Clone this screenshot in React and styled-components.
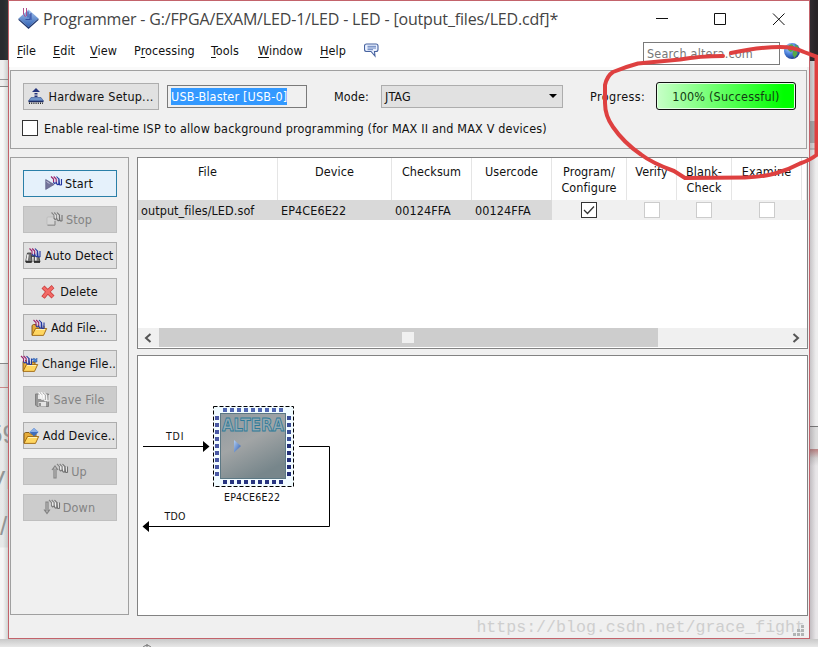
import React, { Component } from 'react';
import styled, { createGlobalStyle } from 'styled-components';

const GlobalStyle = createGlobalStyle`
*{
  box-sizing:border-box;
}
body{
  margin:0;
  overflow:hidden;
  font-family:"DejaVu Sans Condensed","DejaVu Sans",Tahoma,sans-serif;
  font-stretch:condensed;
  font-size:12.5px;
  letter-spacing:.08px;
  color:#111;
}
`

// the little bundle of wires that most of the tool icons carry
const Wires = ({ x = 0, y = 0, grey, light }) => {
  const a = light ? '#fff' : grey ? '#858585' : '#9c2468';
  const b = light ? '#f2f2f2' : grey ? '#727272' : '#2438a0';
  return (
    <g transform={`translate(${x} ${y})`} fill="none" strokeWidth="1.1">
      {!light && <path d="M1.500 1.500l2 2v4M4 1.500l2 2v5M6.800 3v6M9.200 3.500v5.500" stroke={grey ? '#eee' : '#dfe2f6'} />}
      <path d="M0 .5l2.500 2.500v3.500M2.700 .5l2.500 2.500v4" stroke={a} />
      <path d="M5.500 .5l2.300 2.500v5.500M8 2.500l.5 6M10.500 3v6" stroke={b} />
      <path d="M2.500 6q1 2.500 2.700 .5q1 3 2.800 1.800q1.500 1.200 2.500 .5" stroke={b} />
    </g>
  );
};

const Folder = ({ y = 0 }) => (
  <g transform={`translate(0 ${y})`}>
    <path d="M1 13.500V4l1.500-1h3.500l1.500 1.500h5.500v2.500" fill="#e6ac3a" stroke="#7d5412" strokeWidth=".9" />
    <path d="M1 13.900L4.500 7h11.200l-3.200 6.900z" fill="#ffd660" stroke="#9c6510" strokeWidth=".9" />
    <path d="M5 8h9" stroke="#fff3b8" />
  </g>
);

const icons = {
  hardware: (
    <>
      <path d="M8 0L12 4H4zM6.500 5h3v1.500h-3zM6.500 7.500h3V9h-3z" fill="#24347c" />
      <path d="M3 9.500h10L15.500 13H.5z" fill="#6f93c9" stroke="#33508f" strokeWidth=".6" />
      <path d="M.5 13.500h15" stroke="#1d2d66" strokeWidth="1.400" />
      <path d="M1 15.300h14" stroke="#222" strokeWidth="1.500" strokeDasharray="1 1.200" />
    </>
  ),
  start: (
    <>
      <path d="M.7 3.500l8.500 5-8.500 5z" fill="#75759a" stroke="#54547e" strokeWidth=".6" />
      <path d="M1.500 5.500l3 2" stroke="#c5c5dc" />
      <Wires x={6} y={0} />
    </>
  ),
  stop: (
    <>
      <rect x="1" y="5" width="8" height="8" rx="1" fill="#d4d4d4" stroke="#b4b4b4" strokeWidth=".6" />
      <path d="M1.500 13.200h7.500V9" fill="none" stroke="#888" />
      <Wires x={5.5} y={0} grey />
    </>
  ),
  detect: (
    <>
      <path d="M2.500 5h3.500l1 9H.6zM9.500 5H13l2 9H9z" fill="#777" stroke="#333" strokeWidth=".8" />
      <path d="M2 12.500l1-6M10.800 12.500V7" stroke="#eee" strokeWidth="1.600" />
      <path d="M1 14h5.500M9 14h6M6.500 8h3" stroke="#222" strokeWidth="1.300" />
      <Wires x={4.5} y={0} />
    </>
  ),
  delete: (
    <>
      <path d="M3 3Q7 7 13 13M13 2.700Q8 7 3 13.500" fill="none" stroke="#c93d3d" strokeWidth="4.200" />
      <path d="M3.400 3.400Q7 7 12.600 12.600M12.600 3.100Q8 7 3.400 13" fill="none" stroke="#f26a66" strokeWidth="2.700" />
    </>
  ),
  addFile: (
    <>
      <Folder y={1.5} />
      <Wires x={2.5} y={-0.5} />
    </>
  ),
  changeFile: (
    <>
      <Folder y={1.5} />
      <path d="M9.500 4q2-3 4.500-.5l1-1.500v4h-4l1.300-1.200q-1.500-1.500-2.800-.8z" fill="#4c86d4" stroke="#28539c" strokeWidth=".5" />
      <Wires x={-1} y={-0.5} />
    </>
  ),
  save: (
    <>
      <path d="M1.500 2h13v12.500H3l-1.500-1.500z" fill="#969696" stroke="#808080" />
      <path d="M4 2.500h7V7H4z" fill="#e8e8e8" />
      <path d="M4.500 10h7.500v4.500H4.500z" fill="#e4e4e4" />
      <path d="M6 11v3" stroke="#777" strokeWidth="1.500" />
      <Wires x={4.5} y={0} light />
    </>
  ),
  addDevice: (
    <>
      <Folder y={1.5} />
      <path d="M11 0l4.500 4-4.500 4.500L6.500 4z" fill="#3f6dbb" />
      <path d="M11 0l4.500 4H6.500z" fill="#8bb0e6" />
    </>
  ),
  up: (
    <>
      <path d="M1 6l3-4 3 4M3 4.500V14h2V4.500" fill="none" stroke="#838383" strokeWidth="1.200" />
      <Wires x={6} y={-0.5} grey />
    </>
  ),
  down: (
    <>
      <path d="M1 9.500l3 4 3-4M3 11.500V2h2v9.500" fill="none" stroke="#838383" strokeWidth="1.200" />
      <Wires x={6} y={-0.5} grey />
    </>
  ),
};

const Icon = ({ name }) => (
  <IconSvg width="17" height="16" viewBox="0 0 17 16">{icons[name]}</IconSvg>
);

const AppLogo = () => (
  <svg width="21" height="22" viewBox="0 0 21 22">
    <defs>
      <linearGradient id="gem" x1="0" y1="0" x2="0" y2="1">
        <stop offset="0" stopColor="#a9c7ef" />
        <stop offset="1" stopColor="#2f61b4" />
      </linearGradient>
    </defs>
    <path d="M10.500 1.500L20.500 10.500 10.500 19 .5 10.500z" fill="url(#gem)" />
    <path d="M.5 10.500l10 8.500 10-8.500v1.500l-10 9-10-9z" fill="#1f3872" />
    <path d="M5.500 0v6l2 3M8.500 0v8" fill="none" stroke="#b0508e" />
    <path d="M10 3.500v6M7.500 11.500h4.500V6M13 5v7" fill="none" stroke="#344fa6" />
  </svg>
);

const Bubble = () => (
  <BubbleSvg width="16" height="15" viewBox="0 0 16 15">
    <path d="M2.500 1h9.500q2 0 2 2v3.500q0 2-2 2H10.500l.5 4.500-4-4.500h-4.500q-2 0-2-2V3q0-2 2-2z" fill="#eaf1ff" stroke="#47639f" strokeWidth="1.100" />
    <path d="M3.500 3.300H12M3.500 5H12M3.500 6.700H9" stroke="#5674b4" strokeWidth=".9" />
  </BubbleSvg>
);

const Globe = () => (
  <svg width="17" height="17" viewBox="0 0 17 17">
    <defs>
      <radialGradient id="sea" cx=".35" cy=".3" r=".8">
        <stop offset="0" stopColor="#b9d8ff" />
        <stop offset=".5" stopColor="#4a80da" />
        <stop offset="1" stopColor="#142e7c" />
      </radialGradient>
    </defs>
    <circle cx="8" cy="9" r="8" fill="url(#sea)" />
    <path d="M4 4Q6 1.800 8.500 2.500L10 5 8 7l1 2-2.500 1L4 8zM9 8.500l4 1 .5 2.500-3 4-2-3.500zM11.500 2.500l3 2.500-1 2.500-2.500-1z" fill="#55a848" />
  </svg>
);

const pins = [0, 1, 2, 3, 4, 5, 6, 7, 8];

const ChainDiagram = () => (
  <Canvas viewBox="138 356 669 259">
    <defs>
      <linearGradient id="die" x1="0" y1="0" x2=".5" y2="1">
        <stop offset="0" stopColor="#8f9aa0" />
        <stop offset=".5" stopColor="#a2a5a6" />
        <stop offset="1" stopColor="#77868b" />
      </linearGradient>
      <linearGradient id="mark" x1="0" y1="0" x2="1" y2="1">
        <stop offset="0" stopColor="#b2d0f5" />
        <stop offset="1" stopColor="#2d57a8" />
      </linearGradient>
    </defs>
    <path d="M143 446.500h61M299 446.500h30.500v80H149" fill="none" stroke="#000" />
    <path d="M203 441v11l6.500-5.500zM149 521v11l-6.500-5.500z" />
    <rect x="213.500" y="406.500" width="80" height="80" fill="#f1fbff" stroke="#000" strokeDasharray="4 2" />
    {pins.map(i => (
      <g key={i}>
        <rect x={223 + i * 7} y="408" width="4" height="4" fill="#5166b2" />
        <rect x={223 + i * 7} y="480" width="4" height="4" fill="#27347f" />
        <rect x="215" y={416 + i * 7} width="4" height="4" fill="#4957a3" />
        <rect x="287" y={416 + i * 7} width="4" height="4" fill={i < 4 ? '#3a4d95' : '#222e78'} />
      </g>
    ))}
    <rect x="220.500" y="413.500" width="65" height="65" fill="url(#die)" stroke="#5c7884" />
    <Brand x="222" y="430.500" textLength="62" lengthAdjust="spacingAndGlyphs">ALTERA</Brand>
    <path d="M234 440l7 6-7 6.500z" fill="url(#mark)" />
    <Label x="166" y="440" textLength="17.500">TDI</Label>
    <Label x="164.500" y="520" textLength="21">TDO</Label>
    <Label x="224" y="501" textLength="56">EP4CE6E22</Label>
  </Canvas>
);

const menus = [
  { text: 'File', width: 36 },
  { text: 'Edit', width: 37 },
  { text: 'View', width: 44 },
  { text: 'Processing', width: 77, key: 1 },
  { text: 'Tools', width: 47 },
  { text: 'Window', width: 62 },
  { text: 'Help', width: 44 },
];

const tools = [
  { icon: 'start', text: 'Start', active: true },
  { icon: 'stop', text: 'Stop', disabled: true },
  { icon: 'detect', text: 'Auto Detect' },
  { icon: 'delete', text: 'Delete' },
  { icon: 'addFile', text: 'Add File...' },
  { icon: 'changeFile', text: 'Change File..' },
  { icon: 'save', text: 'Save File', disabled: true },
  { icon: 'addDevice', text: 'Add Device..' },
  { icon: 'up', text: 'Up', disabled: true },
  { icon: 'down', text: 'Down', disabled: true },
];

const columns = ['File', 'Device', 'Checksum', 'Usercode', 'Program/\nConfigure', 'Verify', 'Blank-\nCheck', 'Examine'];
const cells = ['output_files/LED.sof', 'EP4CE6E22', '00124FFA', '00124FFA'];

class App extends Component {
  render() {
    return (
      <Desktop>
        <GlobalStyle />
        <LeftEdge>
          <Behind>59</Behind>
          <Behind>VI</Behind>
          <Behind>/</Behind>
        </LeftEdge>
        <Window>
          <TitleBar>
            <AppLogo />
            <Title>Programmer - G:/FPGA/EXAM/LED-1/LED - LED - [output_files/LED.cdf]*</Title>
            <WindowButtons>
              <svg width="131" height="14" viewBox="0 0 131 14" fill="none" stroke="#111">
                <path d="M2 6.500h12M60.500 1.500h11v11h-11zM119 1.500l11.500 11.500M130.500 1.500L119 13" />
              </svg>
            </WindowButtons>
          </TitleBar>
          <MenuBar>
            {menus.map(({ text, width, key = 0 }) => (
              <MenuItem key={text} $width={width}>{text.slice(0, key)}<u>{text[key]}</u>{text.slice(key + 1)}</MenuItem>
            ))}
            <Bubble />
            <Search>Search altera.com</Search>
            <Globe />
          </MenuBar>
          <SetupPanel>
            <SetupRow>
              <SetupButton><Icon name="hardware" />Hardware Setup...</SetupButton>
              <HardwareField><Selected>USB-Blaster [USB-0]</Selected></HardwareField>
              <ModeLabel>Mode:</ModeLabel>
              <ModeSelect>JTAG<Caret /></ModeSelect>
              <ProgressLabel>Progress:</ProgressLabel>
              <Progress>100% (Successful)</Progress>
            </SetupRow>
            <IspRow>
              <Check />
              Enable real-time ISP to allow background programming (for MAX II and MAX V devices)
            </IspRow>
          </SetupPanel>
          <Main>
            <Sidebar>
              {tools.map(t => (
                <ToolButton key={t.text} $active={t.active} disabled={t.disabled}>
                  <Icon name={t.icon} />{t.text}
                </ToolButton>
              ))}
            </Sidebar>
            <Content>
              <Table>
                <Grid>
                  {columns.map(c => <Head key={c}>{c}</Head>)}
                  <Head />
                  {cells.map((c, i) => <Cell key={i} $selected>{c}</Cell>)}
                  <Cell $center>
                    <Check>
                      <svg width="14" height="14" viewBox="0 0 14 14"><path d="M2 7l3.500 3.500L12 3.500" fill="none" stroke="#333" strokeWidth="1.300" /></svg>
                    </Check>
                  </Cell>
                  <Cell $center><Check $dim /></Cell>
                  <Cell $center><Check $dim /></Cell>
                  <Cell $center><Check $dim /></Cell>
                  <Cell />
                </Grid>
                <ScrollBar>
                  <ScrollArrow><svg width="8" height="10"><path d="M6.500 1L2 5l4.500 4" fill="none" stroke="#555" strokeWidth="2" /></svg></ScrollArrow>
                  <Thumb><Grip /></Thumb>
                  <ScrollArrow $end><svg width="8" height="10"><path d="M1.500 1L6 5 1.500 9" fill="none" stroke="#555" strokeWidth="2" /></svg></ScrollArrow>
                </ScrollBar>
              </Table>
              <ChainDiagram />
            </Content>
          </Main>
          <StatusBar>
            <Watermark>https://blog.csdn.net/grace_fight</Watermark>
            <SizeGrip width="12" height="12" fill="#b2b4b4">
              <path d="M8 0h3v3H8zM4 4h3v3H4zM8 4h3v3H8zM0 8h3v3H0zM4 8h3v3H4zM8 8h3v3H8z" />
            </SizeGrip>
          </StatusBar>
        </Window>
        <RightEdge />
        <BottomEdge>
          <svg width="24" height="8" fill="none" stroke="#777"><path d="M2 6.500h20M5 8q7-12 14 0M12 1v7" /></svg>
        </BottomEdge>
        <Scribble viewBox="0 0 818 647">
          <path d="M731 53Q760 47 780 47 794 47 804 52L820 58M816.500 58V155Q810 160 800 163.500 788 170 775 173.500 762 177 745 177.500L685 178 674 171Q652 163 641 154.500 624 143 613 127 605 116 605 103V85Q607 76 613 72 625 67 638 63.500L680 59.500Q700 56 723 56" />
        </Scribble>
      </Desktop>
    );
  }
}

const Desktop = styled.div`
position:relative;
display:grid;
grid-template-columns:8px 802px 8px;
grid-template-rows:639px 8px;
width:818px;
height:647px;
overflow:hidden;
`

const LeftEdge = styled.div`
padding-top:414px;
overflow:hidden;
background:linear-gradient(90deg,transparent 3px,rgba(70,90,80,.22)),
  linear-gradient(#292b2e 60px,#eee 60px,#eee 79px,#999 79px,#999 80px,#eee 80px,#eee 86px,#888 86px,#888 87px,#f8f9f8 87px,#f8f9f8 363px,#888 363px,#888 364px,#e6e6e6 364px,#e6e6e6 387px,#c88 387px,#c88 388px,#e9eaea 388px,#e6e8e8 547px,#f6f6f6 548px);
`

const Behind = styled.div`
height:46px;
margin-left:-12px;
color:#929696;
font:26px/40px "Liberation Sans",sans-serif;
&:last-child{
  margin-left:0;
}
`

const RightEdge = styled.div`
background:linear-gradient(90deg,rgba(80,70,80,.25),transparent 6px),
  linear-gradient(#272427 61px,#ddd 61px,#ddd 121px,#aaa 121px,#aaa 143px,#ddd 143px,#ddd 148px,#999 149px,#eee 150px,#eee 426px,#777 426px,#777 427px,#ddd 427px,#ddd 449px,#b88 449px,#b88 450px,#d2cfd0 458px,#e8e6e8 466px);
`

const BottomEdge = styled.div`
grid-column:1 / 4;
padding-left:135px;
background:linear-gradient(#c9c9c9,#e8e8e8);
`

const Window = styled.div`
display:flex;
flex-direction:column;
border:1px solid #c3636b;
background:#f0f0f0;
`

const TitleBar = styled.div`
display:flex;
align-items:center;
height:37px;
padding:0 24px 2px 9px;
background:#fff;
`

const Title = styled.div`
margin-left:4px;
color:#444;
white-space:nowrap;
letter-spacing:-.17px;
font:16px/24px "Open Sans","Segoe UI",sans-serif;
`

const WindowButtons = styled.div`
display:flex;
margin-left:auto;
`

const MenuBar = styled.div`
display:flex;
align-items:center;
height:29px;
padding:0 8px 5px 8px;
background:#fff;
`

const MenuItem = styled.div`
width:${props => props.$width}px;
u{
  text-underline-offset:2px;
}
`

const BubbleSvg = styled.svg`
flex:none;
`

const Search = styled.div`
align-self:flex-start;
width:137px;
height:23px;
margin:4px 4px 0 auto;
padding-left:3px;
border:1px solid #7a7a7a;
color:#777;
letter-spacing:.2px;
line-height:22px;
white-space:nowrap;
`

const SetupPanel = styled.div`
height:79px;
margin:3px 2px 0 1px;
padding:11px 10px 0 11px;
border:1px solid #a0a0a0;
box-shadow:0 -3px 0 #fafafa;
`

const SetupRow = styled.div`
display:flex;
align-items:center;
height:28px;
white-space:nowrap;
`

const SetupButton = styled.button`
display:flex;
align-items:center;
justify-content:center;
gap:3px;
width:136px;
height:27px;
margin-left:1px;
padding:0;
border:1px solid #adadad;
background:#e1e1e1;
font:inherit;
letter-spacing:.22px;
color:inherit;
`

const HardwareField = styled.div`
display:flex;
align-items:center;
width:140px;
height:23px;
margin-left:8px;
padding-left:3px;
border:1px solid #7a7a7a;
background:#f0f0f0;
`

const Selected = styled.span`
height:17px;
background:#3399ff;
color:#fff;
letter-spacing:.18px;
line-height:17px;
`

const ModeLabel = styled.div`
width:47px;
margin-left:27px;
`

const ModeSelect = styled.div`
display:flex;
align-items:center;
justify-content:space-between;
width:182px;
height:23px;
padding:0 5px 0 3px;
border:1px solid #adadad;
background:#e1e1e1;
`

const Caret = styled.i`
border:4px solid transparent;
border-top-color:#000;
border-bottom:0;
`

const ProgressLabel = styled.div`
width:66px;
margin-left:27px;
letter-spacing:.4px;
`

const Progress = styled.div`
width:140px;
height:28px;
border:1px solid #111;
border-radius:3px;
box-shadow:inset 0 0 0 1px #e4ffe4;
background:linear-gradient(90deg,#c8ffc8,#00ff00 92%);
color:#123c12;
letter-spacing:.2px;
line-height:27px;
text-align:center;
`

const IspRow = styled.div`
display:flex;
align-items:center;
gap:6px;
height:16px;
margin-top:10px;
letter-spacing:.17px;
white-space:nowrap;
`

const Check = styled.span`
display:block;
width:16px;
height:16px;
border:1px solid ${props => props.$dim ? '#ccc' : '#333'};
background:#fff;
`

const Main = styled.div`
display:flex;
gap:8px;
height:459px;
margin:8px 1px 0 1px;
`

const Sidebar = styled.div`
display:flex;
flex-direction:column;
gap:9px;
width:119px;
height:458px;
padding:12px 11px 0 12px;
border:1px solid #a0a0a0;
`

const ToolButton = styled.button`
display:flex;
align-items:center;
justify-content:center;
gap:3px;
width:94px;
height:27px;
padding:0 2px 0 0;
border:1px solid ${props => props.$active ? '#2a7fa8' : props.disabled ? '#bfbfbf' : '#adadad'};
background:${props => props.$active ? '#e5f1fb' : props.disabled ? '#ccc' : '#e1e1e1'};
color:${props => props.disabled ? '#838383' : '#111'};
font:inherit;
letter-spacing:.12px;
white-space:nowrap;
`

const IconSvg = styled.svg`
flex:none;
overflow:visible;
`

const Content = styled.div`
display:flex;
flex-direction:column;
gap:6px;
width:671px;
`

const Table = styled.div`
display:flex;
flex-direction:column;
height:192px;
border:1px solid #828282;
background:#fff;
`

const Grid = styled.div`
display:grid;
grid-template-columns:140px 114px 80px 80px 75px 50px 55px 70px 5px;
grid-template-rows:42px 20px;
`

const Head = styled.div`
padding-top:6px;
border-right:1px solid #e5e5e5;
line-height:16px;
text-align:center;
white-space:pre-line;
`

const Cell = styled.div`
display:flex;
align-items:center;
justify-content:${props => props.$center ? 'center' : 'flex-start'};
padding:${props => props.$center ? '0 1px 0 0' : '0 0 0 3px'};
background:${props => props.$selected ? '#d9d9d9' : '#f0f0f0'};
white-space:nowrap;
`

const ScrollBar = styled.div`
display:flex;
height:19px;
margin-top:auto;
margin-bottom:1px;
background:#f0f0f0;
`

const ScrollArrow = styled.div`
display:flex;
align-items:center;
justify-content:center;
width:21px;
padding-right:2px;
margin-left:${props => props.$end ? 'auto' : 0};
`

const Thumb = styled.div`
display:flex;
align-items:center;
justify-content:center;
width:499px;
padding-right:1px;
background:#cdcdcd;
`

const Grip = styled.i`
width:12px;
height:11px;
background:#f0f0f0;
`

const Canvas = styled.svg`
flex:none;
width:671px;
height:261px;
border:1px solid #828282;
background:#fff;
`

const Label = styled.text`
font-size:10.5px;
fill:#111;
`

const Brand = styled.text`
font:bold 17.5px "DejaVu Sans",sans-serif;
fill:#93a9b2;
stroke:#2f7a98;
stroke-width:.9;
`

const StatusBar = styled.div`
display:flex;
align-items:flex-start;
justify-content:flex-end;
height:21px;
padding-right:4px;
`

const Watermark = styled.div`
margin-top:1px;
color:#cecece;
font:16.6px/22px "Liberation Mono",monospace;
letter-spacing:0;
white-space:nowrap;
`

const SizeGrip = styled.svg`
flex:none;
margin:9px 0 0 -12px;
`

// hand drawn ring around the progress bar, lies over everything
const Scribble = styled.svg`
position:absolute;
inset:0;
fill:none;
stroke:#de4040;
stroke-width:4;
stroke-linecap:round;
stroke-linejoin:round;
pointer-events:none;
`

export default App;
